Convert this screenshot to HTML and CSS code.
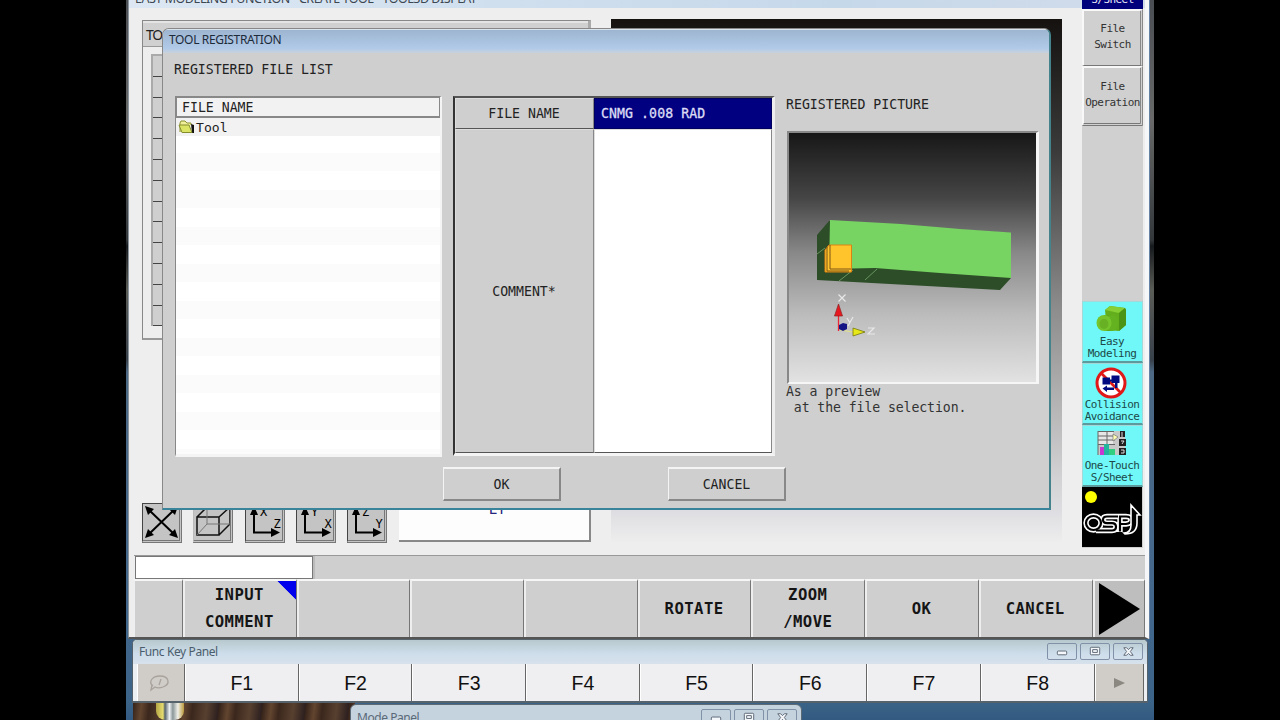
FILE: index.html
```html
<!DOCTYPE html>
<html lang="en">
<head>
<meta charset="utf-8">
<title>Tool Registration</title>
<link rel="stylesheet" href="styles.css">
</head>
<body>
<div class="desktop">
  <div class="wood"></div>
  <div class="vase"></div>

  <section class="app">
    <div class="app-title"><span>EASY MODELING FUNCTION - CREATE TOOL - TOOL3D DISPLAY</span></div>
    <div class="app-body">
      <main class="workspace">
        <div class="left-col">
          <div class="tool-panel">
            <div class="tool-head">TO</div>
            <div class="tool-rows"><i></i><i></i><i></i><i></i><i></i><i></i><i></i><i></i><i></i><i></i><i></i><i></i><i></i></div>
          </div>
          <div class="toolbar">
            <div class="tb"><svg viewBox="0 0 36 36"><path d="M5 5L32 31M32 5L5 31" class="ax"/><path d="M2 2l9 3-6 6zM35 2l-9 3 6 6zM2 34l3-9 6 6zM35 34l-3-9-6 6z"/></svg></div>
            <div class="tb plain"><svg viewBox="0 0 36 36"><path d="M3 13h22v18H3zM3 13L13 3h23L25 13M36 3v17L25 31" class="ln"/><path d="M13 3v17H36M13 20L3 31" class="gr"/></svg></div>
            <div class="tb"><svg viewBox="0 0 36 36"><path d="M8 8V28.500H26" class="ax"/><path d="M8 2l4 9H4zM34 28.500l-9-4.500v9z"/><text x="14" y="12">X</text><text x="27.500" y="24">Z</text></svg></div>
            <div class="tb"><svg viewBox="0 0 36 36"><path d="M8 8V28.500H26" class="ax"/><path d="M8 2l4 9H4zM34 28.500l-9-4.500v9z"/><text x="14" y="12">Y</text><text x="27.500" y="24">X</text></svg></div>
            <div class="tb"><svg viewBox="0 0 36 36"><path d="M8 8V28.500H26" class="ax"/><path d="M8 2l4 9H4zM34 28.500l-9-4.500v9z"/><text x="14" y="12">Z</text><text x="27.500" y="24">Y</text></svg></div>
            <div class="tb-field">LT</div>
          </div>
        </div>
        <div class="view3d"></div>
      </main>
      <aside class="side">
        <div class="sb navy"><span>S/Sheet</span></div>
        <div class="sb gray"><span>File<br>Switch</span></div>
        <div class="sb gray last"><span>File<br>Operation</span></div>
        <div class="side-gap"></div>
        <div class="sb cyan">
          <svg width="34" height="30" viewBox="0 0 34 30"><path d="M10 5l5-4 15 2 1 2v15l-7 6-12-1z" fill="#62ae1c"/><path d="M10 5l5-4 15 2-6 5z" fill="#86cf34"/><path d="M24 8l6-5 1 2v15l-7 6z" fill="#4c9416"/><path d="M9 10l8 0v16H9z" fill="#5ca81e"/><ellipse cx="17" cy="18" rx="6.500" ry="8" fill="#65b220"/><ellipse cx="9" cy="18" rx="7.500" ry="8" fill="#76c42c"/><ellipse cx="9" cy="19" rx="4.500" ry="5" fill="#68b024"/></svg>
          <span>Easy<br>Modeling</span></div>
        <div class="sb cyan">
          <svg width="34" height="32" viewBox="0 0 34 32"><circle cx="16" cy="16" r="14" fill="#fff"/><path d="M6 6l20 20" stroke="#e01818" stroke-width="2.600"/><path d="M7.500 10.500h7.500v7H7.500zM16.500 8.500h8v7.500h-8zM15 12.500h3v2h-3zM20 16h2.500v5H20z" fill="#000a80"/><path d="M7.500 21.500l4.500-3v2h7v2.500h-7v2z" fill="#000a80"/><circle cx="16" cy="16" r="14" fill="none" stroke="#e01818" stroke-width="3"/></svg>
          <span>Collision<br>Avoidance</span></div>
        <div class="sb cyan">
          <svg width="34" height="28" viewBox="0 0 34 28"><path d="M3 2h27v24H3z" fill="#c8c8c8"/><path d="M3 2h15v14H3z" fill="#e6e6e6"/><path d="M3 2.500h16M3 7h17M3 11h17M3 15.500h17M3 2v24M12 2v13" stroke="#666" fill="none"/><path d="M18 5l5 3-5 4z" fill="#ffffb0" stroke="#777" stroke-width=".7"/><path d="M5 18h4v8H5z" fill="#c838d0"/><path d="M9 15h5v11H9z" fill="#22b49c"/><path d="M14 20h6v6h-6z" fill="#30d080"/><path d="M25 2h5v6h-5zM24 10h7v7h-7zM24 19h7v7h-7z" fill="#222"/><path d="M27 3v5M26 12h3l-2 3M26 21h3v3h-3" stroke="#ddd" fill="none"/></svg>
          <span>One-Touch<br>S/Sheet</span></div>
        <div class="osp"><svg width="60" height="59" viewBox="0 0 60 59">
          <circle cx="9" cy="10" r="6" fill="#ff0"/>
          <g fill="none" stroke="#fff" stroke-width="5.400"><ellipse cx="11.500" cy="36" rx="7.500" ry="7"/><path d="M36 29.500H25q-4 0-4 3.300t4 3.300h5q4 0 4 3.700t-4 3.700H14M38 45V29.500h6q5 0 5 3.500t-5 4h-6"/></g>
          <g fill="none" stroke="#000" stroke-width="2.200"><ellipse cx="11.500" cy="36" rx="7.500" ry="7"/><path d="M36 29.500H25q-4 0-4 3.300t4 3.300h5q4 0 4 3.700t-4 3.700H14M38 44.500V29.500h6q5 0 5 3.500t-5 4h-6"/></g>
          <path d="M42 46q7 0 7-8V18l9 10h-3v8q0 11-12 11z" fill="#000" stroke="#fff" stroke-width="1.600"/></svg></div>
      </aside>
    </div>
    <div class="entry"><div class="entry-box"></div><div class="entry-rest"></div></div>
    <div class="softkeys">
      <div></div><div class="mark">INPUT<br>COMMENT</div><div></div><div></div><div></div><div>ROTATE</div><div>ZOOM<br>/MOVE</div><div>OK</div><div>CANCEL</div>
      <div class="next"><svg width="42" height="52" viewBox="0 0 42 52"><path d="M0 0l41 26L0 52z"/></svg></div>
    </div>
  </section>

  <section class="dialog">
    <div class="dlg-title"><span>TOOL REGISTRATION</span></div>
    <div class="dlg-body">
      <div class="col-list">
        <div class="label">REGISTERED FILE LIST</div>
        <div class="files">
          <div class="files-head">FILE NAME</div>
          <div class="file"><svg width="17" height="14" viewBox="0 0 17 14"><path d="M2 12V3l1-2h4l2 2h4v2" fill="#f0ee9a" stroke="#8a9030"/><path d="M13 4l3 1v8h-2z" fill="#111"/><path d="M1 5h10l3 7.500H4z" fill="#dce466" stroke="#848c2c"/></svg><span>Tool</span></div>
        </div>
      </div>
      <div class="props">
        <div class="cell">FILE NAME</div><div class="cell sel">CNMG .008 RAD</div>
        <div class="cell">COMMENT*</div><div class="cell blank"></div>
      </div>
      <div class="col-pic">
        <div class="label">REGISTERED PICTURE</div>
        <div class="picture"><svg width="247" height="249" viewBox="789 133 247 249">
          <path d="M829 221L1011 233 1011 278 1000 290 817 280 817 235z" fill="#2c4d27"/>
          <path d="M830 220L901 224 960 229 1011 232.500V278L940 273 875 268 829 269z" fill="#77d362"/>
          <path d="M817 254l8-6M839 281l14-11M865 280l12-11" stroke="#6b9562" fill="none"/>
          <path d="M829 245h22.500v27H825v-22z" fill="#ffc42c" stroke="#dc8213"/>
          <path d="M827 247v24h22M830 245v24h21" fill="none" stroke="#7c5514"/>
          <path d="M838.500 331V314" stroke="#e82834" stroke-width="1.300"/><path d="M838.500 304l4 12h-8z" fill="#e81820" stroke="#8c2222" stroke-width=".7"/>
          <path d="M840 330l13 2" stroke="#e2e284"/><path d="M853 328l12 4-12 4z" fill="#e6e818" stroke="#77780c" stroke-width=".8"/>
          <path d="M839 325l4-2 4 1v5l-4 2-4-2z" fill="#151585"/>
          <path d="M838.500 294.500l7 7M845.500 294.500l-7 7M847 318l3 5M853 317l-5 9M868 328h6l-6 6h7" fill="none" stroke="#e8e8e8" stroke-width="1.200"/>
        </svg></div>
        <div class="note">As a preview
 at the file selection.</div>
      </div>
    </div>
    <div class="dlg-actions"><button>OK</button><button>CANCEL</button></div>
  </section>

  <section class="fpanel">
    <div class="fp-title"><span>Func Key Panel</span>
      <div class="wins"><b><svg viewBox="0 0 29 16"><rect x="9.500" y="7.500" width="10" height="4" rx="1"/></svg></b><b><svg viewBox="0 0 29 16"><rect x="9.500" y="3.500" width="10" height="8" rx="1"/><path d="M12 6h5v3h-5z"/></svg></b><b><svg viewBox="0 0 29 16"><path d="M10 4h3l2 2 2-2h3l-3 4 3 4h-3l-2-2-2 2h-3l3-4z"/></svg></b></div>
    </div>
    <div class="fkeys">
      <div class="off"><svg width="22" height="18" viewBox="0 0 22 18"><path d="M5 12C0 8 4 2 12 2c9 0 11 8 3 11-3 1-6 1-8 0l-4 3 1-5M13 5l-2 6" fill="none" stroke="#a9a39d" stroke-width="1.300"/></svg></div>
      <div>F1</div><div>F2</div><div>F3</div><div>F4</div><div>F5</div><div>F6</div><div>F7</div><div>F8</div>
      <div class="off"><svg width="11" height="10" viewBox="0 0 11 10"><path d="M0 0l11 5-11 5z" fill="#8a8880"/></svg></div>
    </div>
  </section>

  <section class="mode"><span>Mode Panel</span>
    <div class="wins"><b><svg viewBox="0 0 29 16"><rect x="9.500" y="7.500" width="10" height="4" rx="1"/></svg></b><b><svg viewBox="0 0 29 16"><rect x="9.500" y="3.500" width="10" height="8" rx="1"/><path d="M12 6h5v3h-5z"/></svg></b><b><svg viewBox="0 0 29 16"><path d="M10 4h3l2 2 2-2h3l-3 4 3 4h-3l-2-2-2 2h-3l3-4z"/></svg></b></div>
  </section>
</div>
</body>
</html>
```

FILE: styles.css
```css
* { box-sizing: border-box; }
body { margin: 0; width: 1280px; height: 720px; background: #000; overflow: hidden; font-family: "DejaVu Sans Mono", monospace; color: #222; }
svg { display: block; }
.desktop { position: relative; width: 1028px; height: 720px; margin-left: 126px; overflow: hidden; background: linear-gradient(#4a4d52 0, #686968 120px, #33373a 240px, #171a1d 246px, #5a5c56 290px, #38404a 360px, #4c6884 372px, #43678c 600px, #3c6488 700px, #335b82 720px); }
section { position: absolute; }
.wood { position: absolute; left: 7px; top: 700px; width: 222px; height: 20px; background: repeating-linear-gradient(97deg, #332119 0, #62452f 9px, #3b271d 17px, #58402f 31px, #2d2020 43px); }
.vase { position: absolute; left: 30px; top: 702px; width: 28px; height: 18px; background: linear-gradient(90deg, #b4a544, #e6dc70 25%, #54616a 32%, #eef1f1 48%, #8b969a 60%, #f0efe8 78%, #bb9a3b); border-radius: 0 0 9px 9px; }

.app { left: 2px; top: 0; width: 1021px; height: 639px; background: #eee; border-left: 1px solid #8a949d; border-right: 4px solid #f5f6f8; border-bottom: 2px solid #555; display: flex; flex-direction: column; box-shadow: 1px 0 #6581a4; }
.app-title { height: 8px; background: linear-gradient(90deg, #dce7f3, #c5d8ea 70%, #d2dcea); padding-left: 6px; flex: none; display: flex; align-items: flex-end; }
.app-title span { font: 12.500px/18px "Noto Sans", sans-serif; letter-spacing: -.48px; height: 18px; white-space: nowrap; color: #3c4752; }
.app-body { display: flex; height: 547px; flex: none; }
.workspace { width: 953px; display: flex; gap: 20px; padding: 11px 0 0 13px; flex: none; }
.left-col { width: 449px; display: flex; flex-direction: column; justify-content: space-between; height: 524px; }
.tool-panel { height: 320px; border: 1px solid #888; border-bottom: 2px solid #999; border-right: 3px solid #aaa; background: #eee; margin-top: 1px; }
.tool-head { height: 26px; background: #d0d0d0; border-top: 2px solid #e4e4e4; border-bottom: 1px solid #999; padding-left: 3px; font: 14px/24px "Noto Sans", sans-serif; letter-spacing: -1.2px; }
.tool-rows { margin: 7px 0 0 8px; border-left: 2px solid #aaa; border-top: 2px solid #aaa; width: 400px; }
.tool-rows i { display: block; height: 20.800px; border-bottom: 1px solid #444; background: #cfcfcf; }
.toolbar { display: flex; gap: 11.300px; width: 449px; }
.tb { width: 40px; height: 40px; flex: none; background: #c4c4c4; border: 1px solid #444; border-right: 3px double #777; border-bottom: 3px double #777; }
.tb.plain { border-left-color: #bbb; border-top-color: #bbb; }
.tb svg { width: 36px; height: 36px; font: 12px "DejaVu Sans Mono", monospace; }
.ax { stroke: #000; stroke-width: 2; fill: none; }
.ln { stroke: #111; stroke-width: 1.500; fill: none; }
.gr { stroke: #777; fill: none; }
.tb-field { flex: 1; background: #fdfdfd; border-right: 2px solid #888; border-bottom: 2px solid #888; font-size: 14px; text-align: center; line-height: 13px; color: #25257c; margin-left: 1px; margin-bottom: 1px; padding-left: 6px; }
.view3d { width: 451px; height: 524px; background: linear-gradient(#151210, #3a3a3a 25%, #8c8c8c 55%, #d3d3d5 88%, #dedee2 94%, #eee); }
.side { width: 61px; flex: none; background: #d0d0d0; margin-top: -8px; height: 548px; }
.sb { font-size: 11px; line-height: 12px; text-align: center; display: flex; flex-direction: column; align-items: center; color: #333; border: 1px solid #777; border-left: 2px solid #f8f8f8; border-top: 2px solid #f8f8f8; letter-spacing: -.55px; overflow: hidden; white-space: nowrap; }
.navy { height: 9px; background: #00007c; color: #e8e8f4; border: 0; justify-content: flex-end; line-height: 14px; }
.navy span { margin-bottom: 2px; }
.gray { height: 57px; line-height: 16px; background: #d0d0d0; border-right: 3px double #888; padding-top: 10px; }
.gray span { margin-left: 1px; }
.last { height: 60px; border-bottom: 3px double #777; padding-top: 11px; }
.side-gap { height: 175px; }
.cyan { height: 62px; background: #70f8f8; border: 1px solid #a4d8d8; border-bottom: 2px solid #5c9a9e; justify-content: space-between; padding: 3px 1px 1px 0; color: #1c4848; }
.cyan svg { flex: none; }
.osp { height: 60px; background: #000; width: 60px; }

.entry { height: 24px; flex: none; display: flex; margin: 0 0 0 5px; border-top: 1px solid #999; }
.entry-box { width: 178px; background: #fff; border: 1px solid #777; margin-left: 1px; }
.entry-rest { flex: 1; background: #cfcfcf; border-left: 2px solid #bbb; }
.softkeys { display: grid; grid-template-columns: 50px repeat(8, 113.700px) 1fr; height: 58px; margin-left: 4px; font-weight: bold; font-size: 15.600px; line-height: 27px; }
.softkeys > div { border-top: 2px solid #f6f6f6; border-left: 2px solid #eee; border-right: 1px solid #777; background: #cfcfcf; display: flex; align-items: center; justify-content: center; text-align: center; color: #151515; letter-spacing: .45px; padding-right: 2px; }
.softkeys > .mark { background: linear-gradient(225deg, #0000ec 13px, #cfcfcf 13.500px); }
.softkeys > .next { background: #bebebe; justify-content: flex-start; padding: 0 0 0 4px; }

.dialog { left: 36px; top: 28px; width: 889px; height: 482px; background: #cfcfcf; border: 1px solid #888; border-right: 2px solid #44828c; border-bottom: 2px solid #39839b; border-radius: 7px 7px 0 0; overflow: hidden; }
.dlg-title { height: 24px; padding: 1px 6px; border-top: 1px solid #d9e4ee; background: linear-gradient(#9db5d0, #b1cae8 80%, #c8d2de); font: 12px/18px "Noto Sans", sans-serif; letter-spacing: -.35px; color: #1c2a3a; }
.dlg-body { display: grid; grid-template-columns: 267px 322px 252px; gap: 12px; padding-left: 11px; height: 406px; }
.label { font-size: 13.200px; line-height: 16px; white-space: nowrap; }
.col-list .label { margin-top: 9px; }
.files { margin: 18px 0 0 1px; height: 361px; width: 267px; border: 1px solid #888; border-right: 2px solid #f4f4f4; border-bottom: 3px solid #f4f4f4; background: repeating-linear-gradient(#fff 0 19px, #fcfbfc 19px 37px); }
.files-head { height: 21px; border: 1px solid #888; border-bottom-width: 2px; background: #f2f2f2; font-size: 13.200px; line-height: 20px; padding-left: 5px; }
.file { height: 18px; background: #f2f2f2; display: flex; align-items: center; font-size: 13.100px; padding-left: 2px; gap: 1px; }
.props { margin-top: 43px; height: 360px; display: grid; grid-template-columns: 139px 1fr; grid-template-rows: 31px 1fr; border: 1px solid #888; border-left: 2px solid #333; border-top: 2px solid #555; border-right: 3px solid #eee; border-bottom: 3px solid #f4f4f4; }
.cell { display: flex; align-items: center; justify-content: center; font-size: 13.200px; border: 1px solid #ddd; border-right-color: #888; border-bottom: 1px solid #555; padding-right: 1px; }
.sel { background: #000080; color: #dcdcf5; border-color: #000060; justify-content: flex-start; padding-left: 6px; -webkit-text-stroke: .3px #dcdcf5; letter-spacing: .08px; }
.blank { background: #fff; }
.col-pic { padding-top: 44px; margin-left: -1px; }
.picture { margin: 18px 0 0 1px; width: 252px; height: 253px; border: 2px solid #888; border-right: 3px solid #f6f6f6; border-bottom: 2px solid #f6f6f6; background: linear-gradient(#171717, #454545 26%, #888 48%, #bcbcbc 73%, #e2e2e2); }
.note { font-size: 13.200px; line-height: 16px; white-space: pre; color: #333; letter-spacing: -.1px; }
.dlg-actions { display: flex; gap: 107px; margin: 8px 0 0 280px; }
.dlg-actions button { width: 118px; height: 34px; padding: 0; background: #cfcfcf; border: 1px solid #f4f4f4; border-top-width: 2px; border-right: 2px solid #888; border-bottom: 2px solid #888; font: 13.200px "DejaVu Sans Mono", monospace; color: #222; }

.fpanel { left: 6px; top: 639px; width: 1016px; height: 64px; border: 1px solid #56626c; border-bottom-width: 2px; border-radius: 5px 5px 0 0; background: #edf0f3; overflow: hidden; padding: 0 3px 0 4px; }
.fp-title { margin: 0 -3px 0 -4px; padding: 2px 4px 2px 6px; height: 24px; background: linear-gradient(#b7c9ce, #cfdeec 60%, #d6e1eb); display: flex; justify-content: space-between; font: 12px/20px "Noto Sans", sans-serif; letter-spacing: -.4px; color: #4b5d6c; }
.wins { display: flex; gap: 3px; }
.wins b { width: 30px; height: 17px; border: 1px solid #8192a8; border-radius: 2px; margin-top: 1px; }
.wins svg { width: 28px; height: 15px; fill: #f5f8fb; stroke: #5a6472; }
.fkeys { height: 36px; display: grid; grid-template-columns: 48px repeat(8, 113.700px) 1fr; font: 19.500px/36px "Liberation Sans", sans-serif; color: #111; }
.fkeys > div { background: #efeef0; border-right: 1px solid #666; border-left: 1px solid #fff; text-align: center; line-height: 38px; }
.fkeys > .off { background: #d0ccc7; display: flex; align-items: center; justify-content: center; }
.fkeys > .off:first-child { padding-right: 4px; }
.mode { left: 224px; top: 704px; width: 452px; height: 30px; border: 1px solid #5c6a76; border-radius: 6px 6px 0 0; background: #c5d3df; display: flex; justify-content: space-between; padding: 3px 4px 0 6px; font: 12px/20px "Noto Sans", sans-serif; letter-spacing: -.45px; color: #5a6a78; }
```
